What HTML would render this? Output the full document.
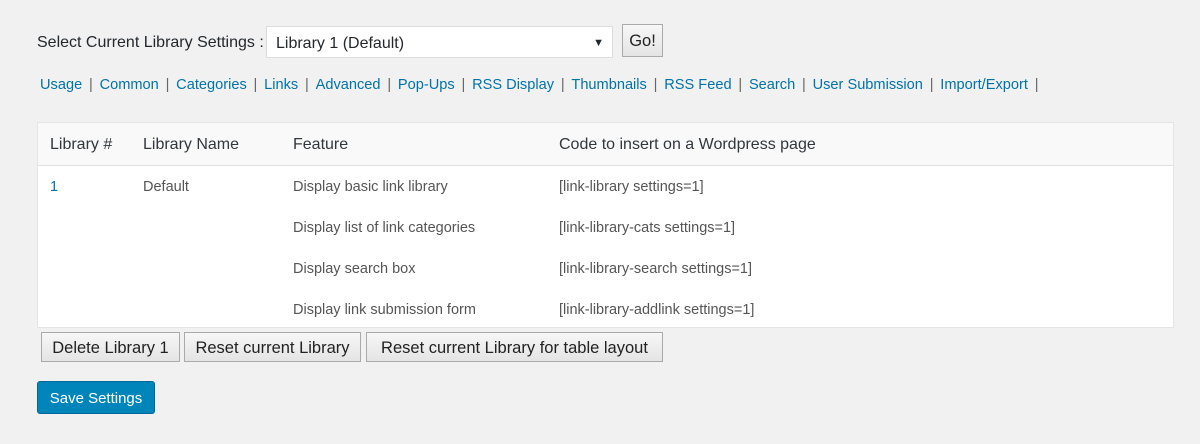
<!DOCTYPE html>
<html><head><style>
body{margin:0;width:1200px;height:444px;background:#f1f1f1;font-family:"Liberation Sans",sans-serif;color:#23282d;position:relative;overflow:hidden}
.a{position:absolute;white-space:nowrap}
.sel{position:absolute;left:266px;top:26px;width:347px;height:32px;background:#fff;border:1px solid #ddd;box-sizing:border-box;font-size:16px;line-height:33px;padding-left:9px}
.btn{position:absolute;background:linear-gradient(#f7f7f7,#e4e4e4);border:1px solid #aaa;box-sizing:border-box;font-size:16.5px;text-align:center;color:#222}
.links{left:40px;top:77px;font-size:14.6px;color:#0073aa}
.links span{color:#666;padding:0 6.8px}
.tbl{position:absolute;left:37px;top:122px;width:1137px;height:206px;background:#fff;border:1px solid #e5e5e5;box-sizing:border-box}
.hdr{position:absolute;left:0;top:0;right:0;height:42px;background:#f9f9f9;border-bottom:1px solid #e1e1e1}
.h{font-size:16px;top:136px;color:#32373c}
.c{font-size:14.5px;color:#555}
</style></head><body>
<div class="a" style="left:37px;top:34px;font-size:16px">Select Current Library Settings :</div>
<div class="sel">Library 1 (Default)<span style="position:absolute;right:8px;top:0;font-size:11px">▼</span></div>
<div class="btn" style="left:622px;top:24px;width:41px;height:33px;line-height:33px">Go!</div>
<div class="a links">Usage<span>|</span>Common<span>|</span>Categories<span>|</span>Links<span>|</span>Advanced<span>|</span>Pop-Ups<span>|</span>RSS Display<span>|</span>Thumbnails<span>|</span>RSS Feed<span>|</span>Search<span>|</span>User Submission<span>|</span>Import/Export<span>|</span></div>
<div class="tbl"><div class="hdr"></div></div>
<div class="a h" style="left:50px">Library #</div>
<div class="a h" style="left:143px">Library Name</div>
<div class="a h" style="left:293px">Feature</div>
<div class="a h" style="left:559px">Code to insert on a Wordpress page</div>
<div class="a c" style="left:50px;top:179px;color:#0073aa">1</div>
<div class="a c" style="left:143px;top:179px">Default</div>
<div class="a c" style="left:293px;top:179px">Display basic link library</div>
<div class="a c" style="left:559px;top:179px">[link-library settings=1]</div>
<div class="a c" style="left:293px;top:220px">Display list of link categories</div>
<div class="a c" style="left:559px;top:220px">[link-library-cats settings=1]</div>
<div class="a c" style="left:293px;top:261px">Display search box</div>
<div class="a c" style="left:559px;top:261px">[link-library-search settings=1]</div>
<div class="a c" style="left:293px;top:302px">Display link submission form</div>
<div class="a c" style="left:559px;top:302px">[link-library-addlink settings=1]</div>
<div class="btn" style="left:41px;top:332px;width:139px;height:30px;line-height:30px">Delete Library 1</div>
<div class="btn" style="left:184px;top:332px;width:177px;height:30px;line-height:30px">Reset current Library</div>
<div class="btn" style="left:366px;top:332px;width:297px;height:30px;line-height:30px">Reset current Library for table layout</div>
<div class="a" style="left:37px;top:381px;width:118px;height:33px;background:#0085ba;border:1px solid #006799;box-sizing:border-box;border-radius:3px;color:#fff;font-size:15px;line-height:33px;text-align:center">Save Settings</div>
</body></html>
